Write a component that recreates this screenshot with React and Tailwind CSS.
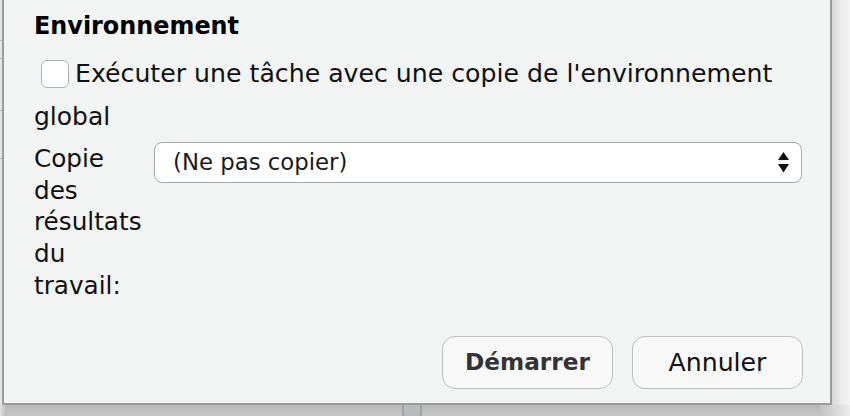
import React from "react";

const font = { fontFamily: '"DejaVu Sans", "Noto Sans", sans-serif' };

export default function App() {
  return (
    <div className="w-[850px] h-[416px] overflow-hidden flex flex-col bg-[#bdbdbd]" style={font}>
      <div className="flex h-[405px]">
        {/* left sliver of the window behind */}
        <div className="w-[2px] flex flex-col bg-[#e4e5e5]">
          <div className="h-[40px]" />
          <div className="h-[1px] bg-[#b5b5b5]" />
          <div className="h-[17px]" />
          <div className="h-[1px] bg-[#b5b5b5]" />
          <div className="h-[51px]" />
          <div className="h-[1px] bg-[#b5b5b5]" />
          <div className="h-[47px]" />
          <div className="h-[1px] bg-[#b5b5b5]" />
        </div>

        {/* dialog */}
        <div className="w-[830px] border-x-2 border-b-2 border-[#9b9b9b] bg-[#f2f3f3] flex flex-col pl-[30px] pr-[27px] pt-[12px] pb-[14px] text-[#111]">
          <div className="text-[23.9px] leading-[28px] font-bold text-black">Environnement</div>

          <div className="mt-[18px] flex items-center">
            <div className="ml-[7px] w-[28px] h-[28px] rounded-[6px] border-[1.5px] border-[#b0b0b0] bg-white shrink-0" />
            <span className="ml-[6px] text-[25.2px] leading-[32px] whitespace-nowrap">
              Exécuter une tâche avec une copie de l'environnement
            </span>
          </div>
          <div className="mt-[11px] text-[25px] leading-[32px]">global</div>

          <div className="mt-[9px] flex items-start">
            <div className="w-[120px] shrink-0 pt-[1px] text-[24.7px] leading-[31.7px]">
              Copie<br />des<br />résultats<br />du<br />travail:
            </div>
            <div className="flex-1 mr-px h-[41px] rounded-[8px] border-[1.5px] border-[#a9a9a9] bg-white flex items-center pl-[18px] pr-[12px]">
              <span className="flex-1 text-[22.8px] text-[#1a1a1a]">(Ne pas copier)</span>
              <svg width="11" height="21" viewBox="0 0 11 21" className="shrink-0">
                <path d="M5.5 0 L11 8 L0 8 Z" fill="#111" />
                <path d="M0 12 L11 12 L5.5 20.5 Z" fill="#111" />
              </svg>
            </div>
          </div>

          <div className="mt-auto flex justify-end gap-[19px]">
            <button className="w-[171px] h-[53px] rounded-[13px] border-[1.5px] border-[#bdbdbd] bg-[#f8f8f9] text-[23.2px] font-bold text-[#333]">
              Démarrer
            </button>
            <button className="w-[171px] h-[53px] rounded-[13px] border-[1.5px] border-[#bdbdbd] bg-[#f8f8f9] text-[25.2px] text-[#111]">
              Annuler
            </button>
          </div>
        </div>

        {/* shadow to the right */}
        <div className="flex-1 bg-gradient-to-r from-[#d6d6d6] via-[#ececec] to-[#f3f3f3]" />
      </div>

      {/* strip below the dialog */}
      <div className="flex-1 flex bg-gradient-to-b from-[#b8b8b8] to-[#c4c4c4]">
        <div className="w-[6px] bg-gradient-to-r from-[#e0e0e0] to-[#bdbdbd]" />
        <div className="w-[396px]" />
        <div className="w-[2px] bg-[#a3a3a3]" />
        <div className="w-[16px] bg-[#b7babc]" />
        <div className="w-[2px] bg-[#a3a3a3]" />
        <div className="flex-1" />
        <div className="w-[30px] bg-gradient-to-r from-[#c2c2c2] to-[#ececec]" />
      </div>
    </div>
  );
}
